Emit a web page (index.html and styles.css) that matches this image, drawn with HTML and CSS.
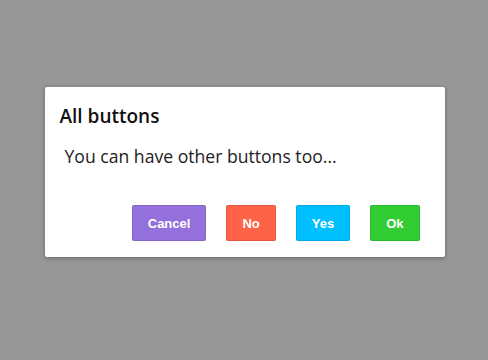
FILE: index.html
```html
<!DOCTYPE html>
<html lang="en">
<head>
    <meta charset="UTF-8">
    <meta name="viewport" content="width=device-width, initial-scale=1.0">
    <title>All buttons</title>
    <link rel="stylesheet" href="styles.css">
</head>
<body>

    <!-- Dialog -->
    <div class="dialog">
        <h2 class="dialog-title">All buttons</h2>
        <p class="dialog-text">You can have other buttons too...</p>
        <div class="dialog-buttons">
            <button class="btn btn-cancel">Cancel</button>
            <button class="btn btn-no">No</button>
            <button class="btn btn-yes">Yes</button>
            <button class="btn btn-ok">Ok</button>
        </div>
    </div>

</body>
</html>
```

FILE: styles.css
```css
body {
    margin: 0;
    padding: 0;
    height: 360px;
    background-color: #979797;
    font-family: "Open Sans", sans-serif;
    display: flex;
    justify-content: center;
    align-items: flex-start;
    overflow: hidden;
}

.dialog {
    width: 400px;
    margin-top: 87px;
    margin-left: 1px;
    background-color: #fff;
    border-radius: 2px;
    box-shadow: 0 1px 4px rgba(0, 0, 0, 0.35);
    padding: 14px 25px 16px 15px;
    box-sizing: border-box;
}

.dialog-title {
    margin: 0;
    font-size: 19px;
    font-weight: 600;
    line-height: 30px;
    color: #111;
}

.dialog-text {
    margin: 12px 0 0 5px;
    font-size: 17.6px;
    line-height: 26px;
    color: #222;
}

.dialog-buttons {
    display: flex;
    justify-content: flex-end;
    gap: 20px;
    margin-top: 36px;
}

.btn {
    font-family: "Liberation Sans", Arial, sans-serif;
    font-size: 13px;
    font-weight: bold;
    color: #fff;
    height: 36px;
    padding: 0 15px;
    border: 1px solid rgba(0, 0, 0, 0.1);
    border-radius: 2px;
    cursor: pointer;
}

.btn-cancel {
    background-color: #9370db;
}

.btn-no {
    background-color: #ff6347;
}

.btn-yes {
    background-color: #00bfff;
}

.btn-ok {
    background-color: #32cd32;
}
```
